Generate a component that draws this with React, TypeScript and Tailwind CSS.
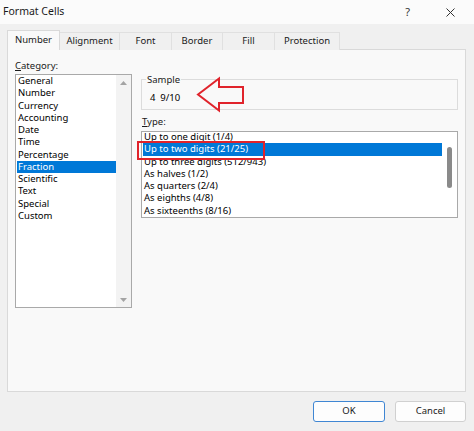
import React from "react";

const categories = [
  "General",
  "Number",
  "Currency",
  "Accounting",
  "Date",
  "Time",
  "Percentage",
  "Fraction",
  "Scientific",
  "Text",
  "Special",
  "Custom",
];

const types = [
  "Up to one digit (1/4)",
  "Up to two digits (21/25)",
  "Up to three digits (512/943)",
  "As halves (1/2)",
  "As quarters (2/4)",
  "As eighths (4/8)",
  "As sixteenths (8/16)",
];

const tabs = [
  { name: "Number", w: "w-[53px]" },
  { name: "Alignment", w: "w-[60px]" },
  { name: "Font", w: "w-[52px]" },
  { name: "Border", w: "w-[51px]" },
  { name: "Fill", w: "w-[52px]" },
  { name: "Protection", w: "w-[65px]" },
];

export default function App() {
  return (
    <div className="relative w-[474px] h-[431px] overflow-hidden bg-[#f0f0f0] text-black font-['Noto_Sans',sans-serif] text-[9.5px]">
      {/* Title bar */}
      <div className="flex items-center h-[24px] bg-[#fbfbfb] pl-[3px] pr-[19px]">
        <span className="text-[10.5px] text-[#1a1a1a]">Format Cells</span>
        <span className="ml-auto text-[11px] text-[#333]">?</span>
        <svg className="ml-[36px]" width="9" height="9" viewBox="0 0 9 9">
          <path d="M0.5 0.5 L8.5 8.5 M8.5 0.5 L0.5 8.5" stroke="#333" strokeWidth="1" fill="none" />
        </svg>
      </div>

      {/* Body */}
      <div className="pt-[7px] pl-[7px]">
        {/* Tabs */}
        <div className="flex items-end h-[19px] -mb-px">
          {tabs.map((t, i) =>
            i === 0 ? (
              <div
                key={t.name}
                className={`relative z-10 ${t.w} h-[20px] bg-[#f9f9f9] border border-b-0 border-[#d9d9d9] flex items-center justify-center text-[#1a1a1a]`}
              >
                {t.name}
              </div>
            ) : (
              <div
                key={t.name}
                className={`${t.w} h-[18px] bg-[#f0f0f0] border-t border-r border-[#e0e0e0] flex items-center justify-center text-[#1a1a1a]`}
              >
                {t.name}
              </div>
            )
          )}
        </div>

        {/* Panel */}
        <div className="w-[459px] h-[343px] bg-[#f9f9f9] border border-[#d9d9d9] flex pl-[7px]">
          {/* Left column */}
          <div className="flex flex-col">
            <div className="mt-[9px] mb-[2px] h-[13px] leading-[13px] text-[#1a1a1a]">
              <span className="underline underline-offset-1">C</span>ategory:
            </div>
            <div className="w-[117px] h-[234px] bg-white border border-[#a9a9a9] flex">
              <div className="flex-1 pl-[1px]">
                {categories.map((c) => (
                  <div
                    key={c}
                    className={`h-[12.27px] leading-[12.27px] pl-[1px] ${
                      c === "Fraction" ? "bg-[#0078d7] text-white" : ""
                    }`}
                  >
                    {c}
                  </div>
                ))}
              </div>
              <div className="w-[15px] bg-[#f3f3f3] flex flex-col justify-between">
                <div className="h-[15px] flex items-center justify-center">
                  <svg width="7" height="4" viewBox="0 0 7 4">
                    <path d="M0 4 L3.5 0 L7 4 Z" fill="#a3a3a3" />
                  </svg>
                </div>
                <div className="h-[15px] flex items-center justify-center">
                  <svg width="7" height="4" viewBox="0 0 7 4">
                    <path d="M0 0 L7 0 L3.5 4 Z" fill="#a3a3a3" />
                  </svg>
                </div>
              </div>
            </div>
          </div>

          {/* Right column */}
          <div className="ml-[9px] w-[317px] flex flex-col">
            <div className="relative mt-[29px] h-[31px] border border-[#dcdcdc] pl-[8px] pt-[11px]">
              <span className="absolute -top-[7px] left-[4px] px-[1px] bg-[#f9f9f9] leading-[13px] text-[#1a1a1a]">
                Sample
              </span>
              <div className="leading-[13px] whitespace-pre">4  9/10</div>
            </div>

            <div className="mt-[5px] mb-[3px] h-[13px] leading-[13px] pl-[1px] text-[#1a1a1a]">
              <span className="underline underline-offset-1">T</span>ype:
            </div>

            <div className="w-[317px] h-[87px] bg-white border border-[#a9a9a9] flex overflow-hidden">
              <div className="flex-1 pl-[1px] -mt-[1px]">
                {types.map((t, i) => (
                  <div
                    key={t}
                    className={`h-[12.3px] leading-[12.3px] pl-[1px] whitespace-nowrap ${
                      i === 1 ? "bg-[#0078d7] text-white" : ""
                    }`}
                  >
                    {t}
                  </div>
                ))}
              </div>
              <div className="w-[15px] bg-white flex flex-col items-center">
                <div className="mt-[15px] w-[5px] h-[41px] rounded-full bg-[#8a8a8a]" />
              </div>
            </div>
          </div>
        </div>
      </div>

      {/* Bottom buttons */}
      <div className="flex justify-end gap-[10px] pr-[8px] mt-[9px]">
        <button className="w-[72px] h-[21px] rounded-[3px] bg-[#fdfdfd] border border-[#3f86d3] text-[#1a1a1a] flex items-center justify-center">
          OK
        </button>
        <button className="w-[71px] h-[21px] rounded-[3px] bg-[#fdfdfd] border border-[#d0d0d0] text-[#1a1a1a] flex items-center justify-center">
          Cancel
        </button>
      </div>

      {/* Annotations */}
      <svg className="absolute left-[196px] top-[76px]" width="50" height="38" viewBox="196 76 50 38">
        <path
          d="M198 94.5 L219 78.5 L219 87 L243 87 L243 103 L219 103 L219 110.5 Z"
          fill="none"
          stroke="#e0232b"
          strokeWidth="2"
          strokeLinejoin="miter"
        />
      </svg>
      <div className="absolute left-[137px] top-[141px] w-[128px] h-[19px] border-2 border-[#e0232b]" />
    </div>
  );
}
